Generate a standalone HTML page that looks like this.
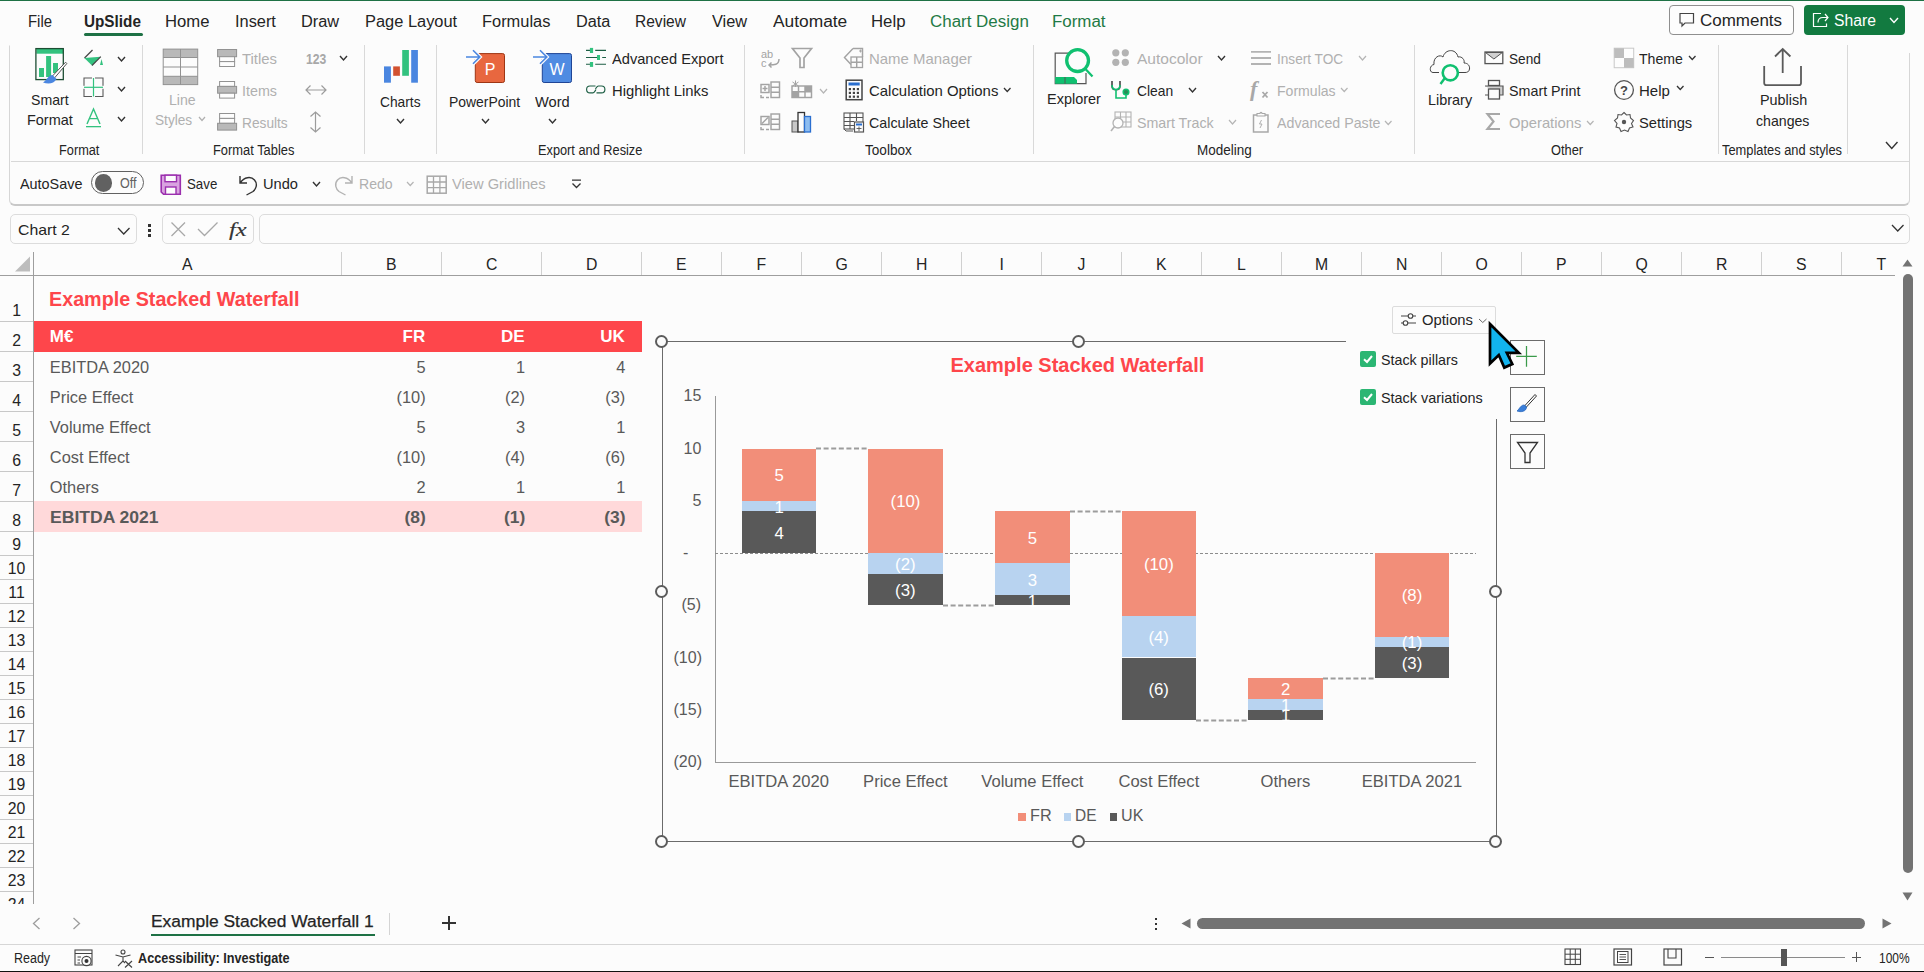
<!DOCTYPE html>
<html><head><meta charset="utf-8"><style>
html,body{margin:0;padding:0;}
body{width:1924px;height:972px;position:relative;overflow:hidden;background:#fcfcfc;font-family:"Liberation Sans",sans-serif;}
.t{position:absolute;white-space:nowrap;transform-origin:0 0;}
.r{position:absolute;}
svg.r{overflow:visible;}
</style></head><body>
<div class="r" style="left:0.0px;top:0.0px;width:1924.0px;height:1.0px;background:#1e7145;"></div>
<span class="t" style="left:27.60px;top:14.46px;font-size:16.00px;line-height:16.00px;color:#242424; transform:scaleX(0.9308);">File</span>
<span class="t" style="left:84.40px;top:14.46px;font-size:16.00px;line-height:16.00px;color:#242424;font-weight:bold; transform:scaleX(0.9550);">UpSlide</span>
<span class="t" style="left:165.30px;top:14.46px;font-size:16.00px;line-height:16.00px;color:#242424; transform:scaleX(1.0419);">Home</span>
<span class="t" style="left:235.20px;top:14.46px;font-size:16.00px;line-height:16.00px;color:#242424; transform:scaleX(1.0220);">Insert</span>
<span class="t" style="left:301.20px;top:14.46px;font-size:16.00px;line-height:16.00px;color:#242424; transform:scaleX(1.0211);">Draw</span>
<span class="t" style="left:365.20px;top:14.46px;font-size:16.00px;line-height:16.00px;color:#242424; transform:scaleX(1.0256);">Page Layout</span>
<span class="t" style="left:482.20px;top:14.46px;font-size:16.00px;line-height:16.00px;color:#242424; transform:scaleX(1.0254);">Formulas</span>
<span class="t" style="left:575.60px;top:14.46px;font-size:16.00px;line-height:16.00px;color:#242424; transform:scaleX(1.0176);">Data</span>
<span class="t" style="left:635.30px;top:14.46px;font-size:16.00px;line-height:16.00px;color:#242424; transform:scaleX(0.9717);">Review</span>
<span class="t" style="left:712.10px;top:14.46px;font-size:16.00px;line-height:16.00px;color:#242424; transform:scaleX(1.0229);">View</span>
<span class="t" style="left:772.60px;top:14.46px;font-size:16.00px;line-height:16.00px;color:#242424; transform:scaleX(1.0841);">Automate</span>
<span class="t" style="left:871.00px;top:14.46px;font-size:16.00px;line-height:16.00px;color:#242424; transform:scaleX(1.0485);">Help</span>
<span class="t" style="left:929.80px;top:14.46px;font-size:16.00px;line-height:16.00px;color:#1f7a45; transform:scaleX(1.0581);">Chart Design</span>
<span class="t" style="left:1052.00px;top:14.46px;font-size:16.00px;line-height:16.00px;color:#1f7a45; transform:scaleX(1.0569);">Format</span>
<div class="r" style="left:84.0px;top:33.0px;width:59.0px;height:3.0px;background:#1e7145;border-radius:1.5px;"></div>
<div class="r" style="left:1669.0px;top:5.0px;width:124.5px;height:30.0px;background:#fdfdfd;border:1px solid #8f8f8f;box-sizing:border-box;border-radius:4px;"></div>
<span class="t" style="left:1699.60px;top:13.46px;font-size:16.00px;line-height:16.00px;color:#242424; transform:scaleX(1.0610);">Comments</span>
<div class="r" style="left:1804.4px;top:5.0px;width:100.2px;height:30.0px;background:#127a40;border-radius:4px;"></div>
<span class="t" style="left:1834.40px;top:13.46px;font-size:16.00px;line-height:16.00px;color:#ffffff; transform:scaleX(0.9814);">Share</span>
<div class="r" style="left:9.0px;top:45.0px;width:1901.0px;height:161.0px;background:#fcfcfc;border:1px solid #d6d6d6;border-top-color:transparent;border-bottom:2px solid #c8c8c8;border-radius:0 0 6px 6px;box-sizing:border-box;"></div>
<div class="r" style="left:11.0px;top:161.0px;width:1898.0px;height:1.0px;background:#d8d8d8;"></div>
<div class="r" style="left:142.0px;top:45.0px;width:1.0px;height:109.0px;background:#d9d9d9;"></div>
<div class="r" style="left:364.0px;top:45.0px;width:1.0px;height:109.0px;background:#d9d9d9;"></div>
<div class="r" style="left:436.0px;top:45.0px;width:1.0px;height:109.0px;background:#d9d9d9;"></div>
<div class="r" style="left:744.0px;top:45.0px;width:1.0px;height:109.0px;background:#d9d9d9;"></div>
<div class="r" style="left:1033.2px;top:45.0px;width:1.0px;height:109.0px;background:#d9d9d9;"></div>
<div class="r" style="left:1414.1px;top:45.0px;width:1.0px;height:109.0px;background:#d9d9d9;"></div>
<div class="r" style="left:1717.5px;top:45.0px;width:1.0px;height:109.0px;background:#d9d9d9;"></div>
<div class="r" style="left:1846.5px;top:45.0px;width:1.0px;height:109.0px;background:#d9d9d9;"></div>
<span class="t" style="left:58.60px;top:142.65px;font-size:14.00px;line-height:14.00px;color:#242424; transform:scaleX(0.9114);">Format</span>
<span class="t" style="left:212.70px;top:142.65px;font-size:14.00px;line-height:14.00px;color:#242424; transform:scaleX(0.9205);">Format Tables</span>
<span class="t" style="left:538.00px;top:142.65px;font-size:14.00px;line-height:14.00px;color:#242424; transform:scaleX(0.9122);">Export and Resize</span>
<span class="t" style="left:865.40px;top:142.65px;font-size:14.00px;line-height:14.00px;color:#242424; transform:scaleX(0.9708);">Toolbox</span>
<span class="t" style="left:1196.60px;top:142.65px;font-size:14.00px;line-height:14.00px;color:#242424; transform:scaleX(0.9632);">Modeling</span>
<span class="t" style="left:1550.60px;top:142.65px;font-size:14.00px;line-height:14.00px;color:#242424; transform:scaleX(0.9171);">Other</span>
<span class="t" style="left:1722.20px;top:142.65px;font-size:14.00px;line-height:14.00px;color:#242424; transform:scaleX(0.9183);">Templates and styles</span>
<span class="t" style="left:31.20px;top:91.60px;font-size:15.00px;line-height:15.00px;color:#242424; transform:scaleX(0.9415);">Smart</span>
<span class="t" style="left:27.40px;top:111.50px;font-size:15.00px;line-height:15.00px;color:#242424; transform:scaleX(0.9625);">Format</span>
<span class="t" style="left:168.60px;top:92.30px;font-size:15.00px;line-height:15.00px;color:#b0b0b0; transform:scaleX(0.9429);">Line</span>
<span class="t" style="left:155.40px;top:112.20px;font-size:15.00px;line-height:15.00px;color:#b0b0b0; transform:scaleX(0.9098);">Styles</span>
<span class="t" style="left:242.30px;top:51.10px;font-size:15.00px;line-height:15.00px;color:#b0b0b0; transform:scaleX(0.9914);">Titles</span>
<span class="t" style="left:242.30px;top:83.30px;font-size:15.00px;line-height:15.00px;color:#b0b0b0; transform:scaleX(0.9541);">Items</span>
<span class="t" style="left:242.30px;top:115.30px;font-size:15.00px;line-height:15.00px;color:#b0b0b0; transform:scaleX(0.9140);">Results</span>
<span class="t" style="left:306.00px;top:51.10px;font-size:15.00px;line-height:15.00px;color:#a8a8a8;font-weight:bold; transform:scaleX(0.8120);">123</span>
<span class="t" style="left:380.30px;top:93.90px;font-size:15.00px;line-height:15.00px;color:#242424; transform:scaleX(0.9182);">Charts</span>
<span class="t" style="left:449.40px;top:93.90px;font-size:15.00px;line-height:15.00px;color:#242424; transform:scaleX(0.9282);">PowerPoint</span>
<span class="t" style="left:535.20px;top:93.90px;font-size:15.00px;line-height:15.00px;color:#242424; transform:scaleX(0.9750);">Word</span>
<span class="t" style="left:611.60px;top:51.20px;font-size:15.00px;line-height:15.00px;color:#242424; transform:scaleX(0.9757);">Advanced Export</span>
<span class="t" style="left:611.60px;top:83.20px;font-size:15.00px;line-height:15.00px;color:#242424; transform:scaleX(0.9878);">Highlight Links</span>
<span class="t" style="left:869.20px;top:51.10px;font-size:15.00px;line-height:15.00px;color:#b0b0b0; transform:scaleX(0.9961);">Name Manager</span>
<span class="t" style="left:869.20px;top:83.30px;font-size:15.00px;line-height:15.00px;color:#242424; transform:scaleX(0.9946);">Calculation Options</span>
<span class="t" style="left:869.20px;top:115.30px;font-size:15.00px;line-height:15.00px;color:#242424; transform:scaleX(0.9505);">Calculate Sheet</span>
<span class="t" style="left:1046.70px;top:90.80px;font-size:15.00px;line-height:15.00px;color:#242424; transform:scaleX(0.9643);">Explorer</span>
<span class="t" style="left:1136.50px;top:51.10px;font-size:15.00px;line-height:15.00px;color:#b0b0b0; transform:scaleX(1.0349);">Autocolor</span>
<span class="t" style="left:1136.50px;top:83.30px;font-size:15.00px;line-height:15.00px;color:#242424; transform:scaleX(0.9231);">Clean</span>
<span class="t" style="left:1136.50px;top:115.30px;font-size:15.00px;line-height:15.00px;color:#b0b0b0; transform:scaleX(0.9481);">Smart Track</span>
<span class="t" style="left:1276.70px;top:51.10px;font-size:15.00px;line-height:15.00px;color:#b0b0b0; transform:scaleX(0.9082);">Insert TOC</span>
<span class="t" style="left:1276.70px;top:83.30px;font-size:15.00px;line-height:15.00px;color:#b0b0b0; transform:scaleX(0.9381);">Formulas</span>
<span class="t" style="left:1276.70px;top:115.30px;font-size:15.00px;line-height:15.00px;color:#b0b0b0; transform:scaleX(0.9477);">Advanced Paste</span>
<span class="t" style="left:1428.40px;top:91.60px;font-size:15.00px;line-height:15.00px;color:#242424; transform:scaleX(0.9630);">Library</span>
<span class="t" style="left:1509.40px;top:51.10px;font-size:15.00px;line-height:15.00px;color:#242424; transform:scaleX(0.9086);">Send</span>
<span class="t" style="left:1509.40px;top:83.30px;font-size:15.00px;line-height:15.00px;color:#242424; transform:scaleX(0.9526);">Smart Print</span>
<span class="t" style="left:1509.40px;top:115.30px;font-size:15.00px;line-height:15.00px;color:#b0b0b0; transform:scaleX(0.9863);">Operations</span>
<span class="t" style="left:1639.00px;top:51.30px;font-size:15.00px;line-height:15.00px;color:#242424; transform:scaleX(0.9404);">Theme</span>
<span class="t" style="left:1639.00px;top:83.30px;font-size:15.00px;line-height:15.00px;color:#242424;">Help</span>
<span class="t" style="left:1639.00px;top:115.30px;font-size:15.00px;line-height:15.00px;color:#242424; transform:scaleX(0.9815);">Settings</span>
<span class="t" style="left:1760.00px;top:92.10px;font-size:15.00px;line-height:15.00px;color:#242424; transform:scaleX(0.9592);">Publish</span>
<span class="t" style="left:1756.20px;top:112.60px;font-size:15.00px;line-height:15.00px;color:#242424; transform:scaleX(0.9421);">changes</span>
<span class="t" style="left:20.10px;top:176.10px;font-size:15.00px;line-height:15.00px;color:#242424; transform:scaleX(0.9600);">AutoSave</span>
<div class="r" style="left:91.4px;top:170.6px;width:53.0px;height:23.7px;border:1px solid #616161;box-sizing:border-box;border-radius:12px;"></div>
<div class="r" style="left:95.3px;top:174.4px;width:17.2px;height:17.2px;border-radius:50%;background:#616161"></div>
<span class="t" style="left:119.60px;top:175.95px;font-size:14.00px;line-height:14.00px;color:#616161; transform:scaleX(0.8947);">Off</span>
<span class="t" style="left:186.50px;top:176.10px;font-size:15.00px;line-height:15.00px;color:#242424; transform:scaleX(0.8853);">Save</span>
<span class="t" style="left:263.40px;top:176.10px;font-size:15.00px;line-height:15.00px;color:#242424; transform:scaleX(0.9750);">Undo</span>
<span class="t" style="left:358.50px;top:176.10px;font-size:15.00px;line-height:15.00px;color:#b0b0b0; transform:scaleX(0.9389);">Redo</span>
<span class="t" style="left:452.00px;top:176.10px;font-size:15.00px;line-height:15.00px;color:#b0b0b0; transform:scaleX(0.9792);">View Gridlines</span>
<div class="r" style="left:10.0px;top:214.0px;width:127.0px;height:30.0px;background:#fcfcfc;border:1px solid #dcdcdc;box-sizing:border-box;border-radius:5px;"></div>
<span class="t" style="left:17.60px;top:221.90px;font-size:15.00px;line-height:15.00px;color:#242424; transform:scaleX(1.0551);">Chart 2</span>
<div class="r" style="left:162.0px;top:214.0px;width:92.0px;height:30.0px;background:#fcfcfc;border:1px solid #dcdcdc;box-sizing:border-box;border-radius:5px;"></div>
<div class="r" style="left:259.0px;top:214.0px;width:1651.0px;height:30.0px;background:#fcfcfc;border:1px solid #dcdcdc;box-sizing:border-box;border-radius:5px;"></div>
<div class="r" style="left:33.0px;top:252.0px;width:1.0px;height:652.0px;background:#9e9e9e;"></div>
<svg class="r" style="left:13.0px;top:255.0px;" width="18" height="18" viewBox="0 0 18 18"><polygon points="17,1.5 17,16.5 2,16.5" fill="#bdbdbd"/></svg>
<div class="r" style="left:0.0px;top:274.5px;width:1895.0px;height:1.0px;background:#9e9e9e;"></div>
<div class="r" style="left:340.5px;top:252.0px;width:1.0px;height:23.0px;background:#d0d0d0;"></div>
<span class="t" style="left:182.00px;top:257.23px;font-size:15.80px;line-height:15.80px;color:#242424;">A</span>
<div class="r" style="left:440.5px;top:252.0px;width:1.0px;height:23.0px;background:#d0d0d0;"></div>
<span class="t" style="left:386.00px;top:257.23px;font-size:15.80px;line-height:15.80px;color:#242424;">B</span>
<div class="r" style="left:540.5px;top:252.0px;width:1.0px;height:23.0px;background:#d0d0d0;"></div>
<span class="t" style="left:486.00px;top:257.23px;font-size:15.80px;line-height:15.80px;color:#242424;">C</span>
<div class="r" style="left:640.5px;top:252.0px;width:1.0px;height:23.0px;background:#d0d0d0;"></div>
<span class="t" style="left:586.00px;top:257.23px;font-size:15.80px;line-height:15.80px;color:#242424;">D</span>
<div class="r" style="left:720.5px;top:252.0px;width:1.0px;height:23.0px;background:#d0d0d0;"></div>
<span class="t" style="left:676.00px;top:257.23px;font-size:15.80px;line-height:15.80px;color:#242424;">E</span>
<div class="r" style="left:800.5px;top:252.0px;width:1.0px;height:23.0px;background:#d0d0d0;"></div>
<span class="t" style="left:756.50px;top:257.23px;font-size:15.80px;line-height:15.80px;color:#242424;">F</span>
<div class="r" style="left:880.5px;top:252.0px;width:1.0px;height:23.0px;background:#d0d0d0;"></div>
<span class="t" style="left:835.50px;top:257.23px;font-size:15.80px;line-height:15.80px;color:#242424;">G</span>
<div class="r" style="left:960.5px;top:252.0px;width:1.0px;height:23.0px;background:#d0d0d0;"></div>
<span class="t" style="left:916.00px;top:257.23px;font-size:15.80px;line-height:15.80px;color:#242424;">H</span>
<div class="r" style="left:1040.5px;top:252.0px;width:1.0px;height:23.0px;background:#d0d0d0;"></div>
<span class="t" style="left:999.50px;top:257.23px;font-size:15.80px;line-height:15.80px;color:#242424;">I</span>
<div class="r" style="left:1120.5px;top:252.0px;width:1.0px;height:23.0px;background:#d0d0d0;"></div>
<span class="t" style="left:1077.50px;top:257.23px;font-size:15.80px;line-height:15.80px;color:#242424;">J</span>
<div class="r" style="left:1200.5px;top:252.0px;width:1.0px;height:23.0px;background:#d0d0d0;"></div>
<span class="t" style="left:1156.00px;top:257.23px;font-size:15.80px;line-height:15.80px;color:#242424;">K</span>
<div class="r" style="left:1280.5px;top:252.0px;width:1.0px;height:23.0px;background:#d0d0d0;"></div>
<span class="t" style="left:1237.00px;top:257.23px;font-size:15.80px;line-height:15.80px;color:#242424;">L</span>
<div class="r" style="left:1360.5px;top:252.0px;width:1.0px;height:23.0px;background:#d0d0d0;"></div>
<span class="t" style="left:1315.00px;top:257.23px;font-size:15.80px;line-height:15.80px;color:#242424;">M</span>
<div class="r" style="left:1440.5px;top:252.0px;width:1.0px;height:23.0px;background:#d0d0d0;"></div>
<span class="t" style="left:1396.00px;top:257.23px;font-size:15.80px;line-height:15.80px;color:#242424;">N</span>
<div class="r" style="left:1520.5px;top:252.0px;width:1.0px;height:23.0px;background:#d0d0d0;"></div>
<span class="t" style="left:1475.50px;top:257.23px;font-size:15.80px;line-height:15.80px;color:#242424;">O</span>
<div class="r" style="left:1600.5px;top:252.0px;width:1.0px;height:23.0px;background:#d0d0d0;"></div>
<span class="t" style="left:1556.00px;top:257.23px;font-size:15.80px;line-height:15.80px;color:#242424;">P</span>
<div class="r" style="left:1680.5px;top:252.0px;width:1.0px;height:23.0px;background:#d0d0d0;"></div>
<span class="t" style="left:1635.50px;top:257.23px;font-size:15.80px;line-height:15.80px;color:#242424;">Q</span>
<div class="r" style="left:1760.5px;top:252.0px;width:1.0px;height:23.0px;background:#d0d0d0;"></div>
<span class="t" style="left:1716.00px;top:257.23px;font-size:15.80px;line-height:15.80px;color:#242424;">R</span>
<div class="r" style="left:1840.5px;top:252.0px;width:1.0px;height:23.0px;background:#d0d0d0;"></div>
<span class="t" style="left:1796.00px;top:257.23px;font-size:15.80px;line-height:15.80px;color:#242424;">S</span>
<span class="t" style="left:1876.50px;top:257.23px;font-size:15.80px;line-height:15.80px;color:#242424;">T</span>
<div class="r" style="left:0.0px;top:320.5px;width:33.0px;height:1.0px;background:#c8c8c8;"></div>
<span class="t" style="left:12.30px;top:302.63px;font-size:15.80px;line-height:15.80px;color:#242424;">1</span>
<div class="r" style="left:0.0px;top:350.5px;width:33.0px;height:1.0px;background:#c8c8c8;"></div>
<span class="t" style="left:12.30px;top:332.63px;font-size:15.80px;line-height:15.80px;color:#242424;">2</span>
<div class="r" style="left:0.0px;top:380.5px;width:33.0px;height:1.0px;background:#c8c8c8;"></div>
<span class="t" style="left:12.30px;top:362.63px;font-size:15.80px;line-height:15.80px;color:#242424;">3</span>
<div class="r" style="left:0.0px;top:410.5px;width:33.0px;height:1.0px;background:#c8c8c8;"></div>
<span class="t" style="left:12.30px;top:392.63px;font-size:15.80px;line-height:15.80px;color:#242424;">4</span>
<div class="r" style="left:0.0px;top:440.5px;width:33.0px;height:1.0px;background:#c8c8c8;"></div>
<span class="t" style="left:12.30px;top:422.63px;font-size:15.80px;line-height:15.80px;color:#242424;">5</span>
<div class="r" style="left:0.0px;top:470.5px;width:33.0px;height:1.0px;background:#c8c8c8;"></div>
<span class="t" style="left:12.30px;top:452.63px;font-size:15.80px;line-height:15.80px;color:#242424;">6</span>
<div class="r" style="left:0.0px;top:500.5px;width:33.0px;height:1.0px;background:#c8c8c8;"></div>
<span class="t" style="left:12.30px;top:482.63px;font-size:15.80px;line-height:15.80px;color:#242424;">7</span>
<div class="r" style="left:0.0px;top:530.5px;width:33.0px;height:1.0px;background:#c8c8c8;"></div>
<span class="t" style="left:12.30px;top:512.63px;font-size:15.80px;line-height:15.80px;color:#242424;">8</span>
<div class="r" style="left:0.0px;top:554.5px;width:33.0px;height:1.0px;background:#c8c8c8;"></div>
<span class="t" style="left:12.30px;top:536.63px;font-size:15.80px;line-height:15.80px;color:#242424;">9</span>
<div class="r" style="left:0.0px;top:578.5px;width:33.0px;height:1.0px;background:#c8c8c8;"></div>
<span class="t" style="left:7.80px;top:560.63px;font-size:15.80px;line-height:15.80px;color:#242424;">10</span>
<div class="r" style="left:0.0px;top:602.5px;width:33.0px;height:1.0px;background:#c8c8c8;"></div>
<span class="t" style="left:8.30px;top:584.63px;font-size:15.80px;line-height:15.80px;color:#242424;">11</span>
<div class="r" style="left:0.0px;top:626.5px;width:33.0px;height:1.0px;background:#c8c8c8;"></div>
<span class="t" style="left:7.80px;top:608.63px;font-size:15.80px;line-height:15.80px;color:#242424;">12</span>
<div class="r" style="left:0.0px;top:650.5px;width:33.0px;height:1.0px;background:#c8c8c8;"></div>
<span class="t" style="left:7.80px;top:632.63px;font-size:15.80px;line-height:15.80px;color:#242424;">13</span>
<div class="r" style="left:0.0px;top:674.5px;width:33.0px;height:1.0px;background:#c8c8c8;"></div>
<span class="t" style="left:7.80px;top:656.63px;font-size:15.80px;line-height:15.80px;color:#242424;">14</span>
<div class="r" style="left:0.0px;top:698.5px;width:33.0px;height:1.0px;background:#c8c8c8;"></div>
<span class="t" style="left:7.80px;top:680.63px;font-size:15.80px;line-height:15.80px;color:#242424;">15</span>
<div class="r" style="left:0.0px;top:722.5px;width:33.0px;height:1.0px;background:#c8c8c8;"></div>
<span class="t" style="left:7.80px;top:704.63px;font-size:15.80px;line-height:15.80px;color:#242424;">16</span>
<div class="r" style="left:0.0px;top:746.5px;width:33.0px;height:1.0px;background:#c8c8c8;"></div>
<span class="t" style="left:7.80px;top:728.63px;font-size:15.80px;line-height:15.80px;color:#242424;">17</span>
<div class="r" style="left:0.0px;top:770.5px;width:33.0px;height:1.0px;background:#c8c8c8;"></div>
<span class="t" style="left:7.80px;top:752.63px;font-size:15.80px;line-height:15.80px;color:#242424;">18</span>
<div class="r" style="left:0.0px;top:794.5px;width:33.0px;height:1.0px;background:#c8c8c8;"></div>
<span class="t" style="left:7.80px;top:776.63px;font-size:15.80px;line-height:15.80px;color:#242424;">19</span>
<div class="r" style="left:0.0px;top:818.5px;width:33.0px;height:1.0px;background:#c8c8c8;"></div>
<span class="t" style="left:7.80px;top:800.63px;font-size:15.80px;line-height:15.80px;color:#242424;">20</span>
<div class="r" style="left:0.0px;top:842.5px;width:33.0px;height:1.0px;background:#c8c8c8;"></div>
<span class="t" style="left:7.80px;top:824.63px;font-size:15.80px;line-height:15.80px;color:#242424;">21</span>
<div class="r" style="left:0.0px;top:866.5px;width:33.0px;height:1.0px;background:#c8c8c8;"></div>
<span class="t" style="left:7.80px;top:848.63px;font-size:15.80px;line-height:15.80px;color:#242424;">22</span>
<div class="r" style="left:0.0px;top:890.5px;width:33.0px;height:1.0px;background:#c8c8c8;"></div>
<span class="t" style="left:7.80px;top:872.63px;font-size:15.80px;line-height:15.80px;color:#242424;">23</span>
<span class="t" style="left:7.80px;top:896.63px;font-size:15.80px;line-height:15.80px;color:#242424;">24</span>
<span class="t" style="left:49.20px;top:289.07px;font-size:20.00px;line-height:20.00px;color:#fe464b;font-weight:bold; transform:scaleX(0.9866);">Example Stacked Waterfall</span>
<div class="r" style="left:34.0px;top:321.0px;width:608.0px;height:30.5px;background:#fe464b;"></div>
<span class="t" style="left:49.80px;top:328.41px;font-size:17.00px;line-height:17.00px;color:#ffffff;font-weight:bold;">M€</span>
<span class="t" style="left:402.50px;top:328.41px;font-size:17.00px;line-height:17.00px;color:#ffffff;font-weight:bold;">FR</span>
<span class="t" style="left:501.00px;top:328.41px;font-size:17.00px;line-height:17.00px;color:#ffffff;font-weight:bold;">DE</span>
<span class="t" style="left:600.30px;top:328.41px;font-size:17.00px;line-height:17.00px;color:#ffffff;font-weight:bold;">UK</span>
<span class="t" style="left:49.80px;top:358.82px;font-size:16.40px;line-height:16.40px;color:#595959;">EBITDA 2020</span>
<span class="t" style="left:416.50px;top:358.82px;font-size:16.40px;line-height:16.40px;color:#595959;">5</span>
<span class="t" style="left:516.00px;top:358.82px;font-size:16.40px;line-height:16.40px;color:#595959;">1</span>
<span class="t" style="left:616.30px;top:358.82px;font-size:16.40px;line-height:16.40px;color:#595959;">4</span>
<span class="t" style="left:49.80px;top:388.82px;font-size:16.40px;line-height:16.40px;color:#595959;">Price Effect</span>
<span class="t" style="left:396.50px;top:388.82px;font-size:16.40px;line-height:16.40px;color:#595959;">(10)</span>
<span class="t" style="left:505.00px;top:388.82px;font-size:16.40px;line-height:16.40px;color:#595959;">(2)</span>
<span class="t" style="left:605.30px;top:388.82px;font-size:16.40px;line-height:16.40px;color:#595959;">(3)</span>
<span class="t" style="left:49.80px;top:418.82px;font-size:16.40px;line-height:16.40px;color:#595959;">Volume Effect</span>
<span class="t" style="left:416.50px;top:418.82px;font-size:16.40px;line-height:16.40px;color:#595959;">5</span>
<span class="t" style="left:516.00px;top:418.82px;font-size:16.40px;line-height:16.40px;color:#595959;">3</span>
<span class="t" style="left:616.30px;top:418.82px;font-size:16.40px;line-height:16.40px;color:#595959;">1</span>
<span class="t" style="left:49.80px;top:448.82px;font-size:16.40px;line-height:16.40px;color:#595959;">Cost Effect</span>
<span class="t" style="left:396.50px;top:448.82px;font-size:16.40px;line-height:16.40px;color:#595959;">(10)</span>
<span class="t" style="left:505.00px;top:448.82px;font-size:16.40px;line-height:16.40px;color:#595959;">(4)</span>
<span class="t" style="left:605.30px;top:448.82px;font-size:16.40px;line-height:16.40px;color:#595959;">(6)</span>
<span class="t" style="left:49.80px;top:478.82px;font-size:16.40px;line-height:16.40px;color:#595959;">Others</span>
<span class="t" style="left:416.50px;top:478.82px;font-size:16.40px;line-height:16.40px;color:#595959;">2</span>
<span class="t" style="left:516.00px;top:478.82px;font-size:16.40px;line-height:16.40px;color:#595959;">1</span>
<span class="t" style="left:616.30px;top:478.82px;font-size:16.40px;line-height:16.40px;color:#595959;">1</span>
<div class="r" style="left:34.0px;top:501.0px;width:608.0px;height:30.5px;background:#ffd9da;"></div>
<span class="t" style="left:49.80px;top:508.57px;font-size:17.40px;line-height:17.40px;color:#595959;font-weight:bold; transform:scaleX(1.0093);">EBITDA 2021</span>
<span class="t" style="left:404.50px;top:508.57px;font-size:17.40px;line-height:17.40px;color:#595959;font-weight:bold;">(8)</span>
<span class="t" style="left:504.00px;top:508.57px;font-size:17.40px;line-height:17.40px;color:#595959;font-weight:bold;">(1)</span>
<span class="t" style="left:604.30px;top:508.57px;font-size:17.40px;line-height:17.40px;color:#595959;font-weight:bold;">(3)</span>
<div class="r" style="left:662.0px;top:341.0px;width:1.0px;height:501.0px;background:#6b6b6b;"></div>
<div class="r" style="left:662.0px;top:841.0px;width:834.0px;height:1.0px;background:#6b6b6b;"></div>
<div class="r" style="left:662.0px;top:341.0px;width:684.0px;height:1.0px;background:#6b6b6b;"></div>
<div class="r" style="left:1495.5px;top:419.0px;width:1.0px;height:423.0px;background:#6b6b6b;"></div>
<span class="t" style="left:950.50px;top:355.07px;font-size:20.00px;line-height:20.00px;color:#fe464b;font-weight:bold;">Example Stacked Waterfall</span>
<div class="r" style="left:715.0px;top:396.4px;width:1.0px;height:366.0px;background:#9a9a9a;"></div>
<div class="r" style="left:715.0px;top:761.5px;width:761.0px;height:1.0px;background:#9a9a9a;"></div>
<span class="t" style="left:683.50px;top:388.37px;font-size:16.00px;line-height:16.00px;color:#595959;">15</span>
<span class="t" style="left:683.50px;top:440.60px;font-size:16.00px;line-height:16.00px;color:#595959;">10</span>
<span class="t" style="left:692.50px;top:492.83px;font-size:16.00px;line-height:16.00px;color:#595959;">5</span>
<span class="t" style="left:683.00px;top:545.06px;font-size:16.00px;line-height:16.00px;color:#595959;">-</span>
<span class="t" style="left:681.50px;top:597.29px;font-size:16.00px;line-height:16.00px;color:#595959;">(5)</span>
<span class="t" style="left:673.50px;top:649.52px;font-size:16.00px;line-height:16.00px;color:#595959;">(10)</span>
<span class="t" style="left:673.50px;top:701.75px;font-size:16.00px;line-height:16.00px;color:#595959;">(15)</span>
<span class="t" style="left:673.50px;top:753.98px;font-size:16.00px;line-height:16.00px;color:#595959;">(20)</span>
<svg class="r" style="left:715px;top:552.5px" width="761" height="2"><line x1="0" y1="0.5" x2="761" y2="0.5" stroke="#8c8c8c" stroke-width="1" stroke-dasharray="3,2"/></svg>
<div class="r" style="left:741.6px;top:511.2px;width:74.6px;height:41.8px;background:#595959;"></div>
<div class="r" style="left:741.6px;top:500.8px;width:74.6px;height:10.4px;background:#b8d3f0;"></div>
<div class="r" style="left:741.6px;top:448.5px;width:74.6px;height:52.2px;background:#f28e79;"></div>
<span class="t" style="left:774.43px;top:525.69px;font-size:16.80px;line-height:16.80px;color:#ffffff;">4</span>
<span class="t" style="left:774.43px;top:499.57px;font-size:16.80px;line-height:16.80px;color:#ffffff;">1</span>
<span class="t" style="left:774.43px;top:468.23px;font-size:16.80px;line-height:16.80px;color:#ffffff;">5</span>
<span class="t" style="left:728.43px;top:773.65px;font-size:16.60px;line-height:16.60px;color:#595959;">EBITDA 2020</span>
<div class="r" style="left:868.3px;top:448.5px;width:74.6px;height:104.5px;background:#f28e79;"></div>
<div class="r" style="left:868.3px;top:553.0px;width:74.6px;height:20.9px;background:#b8d3f0;"></div>
<div class="r" style="left:868.3px;top:573.9px;width:74.6px;height:31.3px;background:#595959;"></div>
<span class="t" style="left:890.59px;top:494.35px;font-size:16.80px;line-height:16.80px;color:#ffffff;">(10)</span>
<span class="t" style="left:895.09px;top:557.02px;font-size:16.80px;line-height:16.80px;color:#ffffff;">(2)</span>
<span class="t" style="left:895.09px;top:583.14px;font-size:16.80px;line-height:16.80px;color:#ffffff;">(3)</span>
<span class="t" style="left:863.09px;top:773.65px;font-size:16.60px;line-height:16.60px;color:#595959;">Price Effect</span>
<div class="r" style="left:995.0px;top:594.8px;width:74.6px;height:10.4px;background:#595959;"></div>
<div class="r" style="left:995.0px;top:563.4px;width:74.6px;height:31.3px;background:#b8d3f0;"></div>
<div class="r" style="left:995.0px;top:511.2px;width:74.6px;height:52.2px;background:#f28e79;"></div>
<span class="t" style="left:1027.75px;top:593.59px;font-size:16.80px;line-height:16.80px;color:#ffffff;">1</span>
<span class="t" style="left:1027.75px;top:572.69px;font-size:16.80px;line-height:16.80px;color:#ffffff;">3</span>
<span class="t" style="left:1027.75px;top:530.91px;font-size:16.80px;line-height:16.80px;color:#ffffff;">5</span>
<span class="t" style="left:981.25px;top:773.65px;font-size:16.60px;line-height:16.60px;color:#595959;">Volume Effect</span>
<div class="r" style="left:1121.6px;top:511.2px;width:74.6px;height:104.5px;background:#f28e79;"></div>
<div class="r" style="left:1121.6px;top:615.7px;width:74.6px;height:41.8px;background:#b8d3f0;"></div>
<div class="r" style="left:1121.6px;top:657.5px;width:74.6px;height:62.7px;background:#595959;"></div>
<span class="t" style="left:1143.91px;top:557.02px;font-size:16.80px;line-height:16.80px;color:#ffffff;">(10)</span>
<span class="t" style="left:1148.41px;top:630.15px;font-size:16.80px;line-height:16.80px;color:#ffffff;">(4)</span>
<span class="t" style="left:1148.41px;top:682.38px;font-size:16.80px;line-height:16.80px;color:#ffffff;">(6)</span>
<span class="t" style="left:1118.41px;top:773.65px;font-size:16.60px;line-height:16.60px;color:#595959;">Cost Effect</span>
<div class="r" style="left:1248.3px;top:709.7px;width:74.6px;height:10.4px;background:#595959;"></div>
<div class="r" style="left:1248.3px;top:699.2px;width:74.6px;height:10.4px;background:#b8d3f0;"></div>
<div class="r" style="left:1248.3px;top:678.4px;width:74.6px;height:20.9px;background:#f28e79;"></div>
<span class="t" style="left:1281.07px;top:708.49px;font-size:16.80px;line-height:16.80px;color:#ffffff;">1</span>
<span class="t" style="left:1281.07px;top:698.05px;font-size:16.80px;line-height:16.80px;color:#ffffff;">1</span>
<span class="t" style="left:1281.07px;top:682.38px;font-size:16.80px;line-height:16.80px;color:#ffffff;">2</span>
<span class="t" style="left:1260.57px;top:773.65px;font-size:16.60px;line-height:16.60px;color:#595959;">Others</span>
<div class="r" style="left:1374.9px;top:553.0px;width:74.6px;height:83.6px;background:#f28e79;"></div>
<div class="r" style="left:1374.9px;top:636.6px;width:74.6px;height:10.4px;background:#b8d3f0;"></div>
<div class="r" style="left:1374.9px;top:647.0px;width:74.6px;height:31.3px;background:#595959;"></div>
<span class="t" style="left:1401.73px;top:588.36px;font-size:16.80px;line-height:16.80px;color:#ffffff;">(8)</span>
<span class="t" style="left:1401.73px;top:635.37px;font-size:16.80px;line-height:16.80px;color:#ffffff;">(1)</span>
<span class="t" style="left:1401.73px;top:656.26px;font-size:16.80px;line-height:16.80px;color:#ffffff;">(3)</span>
<span class="t" style="left:1361.73px;top:773.65px;font-size:16.60px;line-height:16.60px;color:#595959;">EBITDA 2021</span>
<svg class="r" style="left:816.2px;top:447.0px" width="52.1" height="3"><line x1="0" y1="1.5" x2="52.1" y2="1.5" stroke="#9c9c9c" stroke-width="2.2" stroke-dasharray="5,2.6"/></svg>
<svg class="r" style="left:942.9px;top:603.7px" width="52.1" height="3"><line x1="0" y1="1.5" x2="52.1" y2="1.5" stroke="#9c9c9c" stroke-width="2.2" stroke-dasharray="5,2.6"/></svg>
<svg class="r" style="left:1069.5px;top:509.7px" width="52.1" height="3"><line x1="0" y1="1.5" x2="52.1" y2="1.5" stroke="#9c9c9c" stroke-width="2.2" stroke-dasharray="5,2.6"/></svg>
<svg class="r" style="left:1196.2px;top:718.6px" width="52.1" height="3"><line x1="0" y1="1.5" x2="52.1" y2="1.5" stroke="#9c9c9c" stroke-width="2.2" stroke-dasharray="5,2.6"/></svg>
<svg class="r" style="left:1322.9px;top:676.9px" width="52.1" height="3"><line x1="0" y1="1.5" x2="52.1" y2="1.5" stroke="#9c9c9c" stroke-width="2.2" stroke-dasharray="5,2.6"/></svg>
<div class="r" style="left:1018.3px;top:812.8px;width:7.5px;height:7.8px;background:#f28e79;"></div>
<span class="t" style="left:1030.20px;top:807.95px;font-size:16.60px;line-height:16.60px;color:#595959; transform:scaleX(0.9773);">FR</span>
<div class="r" style="left:1063.6px;top:812.8px;width:7.5px;height:7.8px;background:#b8d3f0;"></div>
<span class="t" style="left:1075.00px;top:807.95px;font-size:16.60px;line-height:16.60px;color:#595959; transform:scaleX(0.9304);">DE</span>
<div class="r" style="left:1109.5px;top:812.8px;width:7.5px;height:7.8px;background:#595959;"></div>
<span class="t" style="left:1120.90px;top:807.95px;font-size:16.60px;line-height:16.60px;color:#595959; transform:scaleX(0.9708);">UK</span>
<div class="r" style="left:655.3px;top:334.6px;width:9.2px;height:9.2px;border:2.4px solid #5c5c5c;border-radius:50%;background:#fcfcfc"></div>
<div class="r" style="left:1072.0px;top:334.6px;width:9.2px;height:9.2px;border:2.4px solid #5c5c5c;border-radius:50%;background:#fcfcfc"></div>
<div class="r" style="left:655.3px;top:584.6px;width:9.2px;height:9.2px;border:2.4px solid #5c5c5c;border-radius:50%;background:#fcfcfc"></div>
<div class="r" style="left:1488.9px;top:584.6px;width:9.2px;height:9.2px;border:2.4px solid #5c5c5c;border-radius:50%;background:#fcfcfc"></div>
<div class="r" style="left:655.3px;top:834.5px;width:9.2px;height:9.2px;border:2.4px solid #5c5c5c;border-radius:50%;background:#fcfcfc"></div>
<div class="r" style="left:1072.0px;top:834.5px;width:9.2px;height:9.2px;border:2.4px solid #5c5c5c;border-radius:50%;background:#fcfcfc"></div>
<div class="r" style="left:1488.9px;top:834.5px;width:9.2px;height:9.2px;border:2.4px solid #5c5c5c;border-radius:50%;background:#fcfcfc"></div>
<div class="r" style="left:1392.4px;top:305.5px;width:103.6px;height:28.7px;background:#fcfcfc;border:1px solid #dcdcdc;box-sizing:border-box;border-radius:2px;"></div>
<span class="t" style="left:1421.60px;top:311.60px;font-size:15.00px;line-height:15.00px;color:#242424; transform:scaleX(0.9865);">Options</span>
<div class="r" style="left:1360.1px;top:351.1px;width:16.0px;height:16.0px;background:#2bb673;border-radius:2px;"></div>
<svg class="r" style="left:1360.1px;top:351.1px;" width="16" height="16" viewBox="0 0 16 16"><polyline points="4,8.3 7,11 12,5" fill="none" stroke="#fff" stroke-width="2"/></svg>
<span class="t" style="left:1381.00px;top:352.00px;font-size:15.00px;line-height:15.00px;color:#242424; transform:scaleX(0.9506);">Stack pillars</span>
<div class="r" style="left:1360.1px;top:389.0px;width:16.0px;height:16.0px;background:#2bb673;border-radius:2px;"></div>
<svg class="r" style="left:1360.1px;top:389.0px;" width="16" height="16" viewBox="0 0 16 16"><polyline points="4,8.3 7,11 12,5" fill="none" stroke="#fff" stroke-width="2"/></svg>
<span class="t" style="left:1381.00px;top:389.90px;font-size:15.00px;line-height:15.00px;color:#242424; transform:scaleX(0.9604);">Stack variations</span>
<div class="r" style="left:1510.2px;top:340.1px;width:34.5px;height:34.5px;background:#fcfcfc;border:1px solid #6b6b6b;box-sizing:border-box;"></div>
<div class="r" style="left:1510.2px;top:387.0px;width:34.5px;height:34.5px;background:#fcfcfc;border:1px solid #6b6b6b;box-sizing:border-box;"></div>
<div class="r" style="left:1510.2px;top:434.1px;width:34.5px;height:34.5px;background:#fcfcfc;border:1px solid #6b6b6b;box-sizing:border-box;"></div>
<div class="r" style="left:0.0px;top:904.0px;width:1924.0px;height:68.0px;background:#fcfcfc;"></div>
<div class="r" style="left:1902.5px;top:273.6px;width:10.0px;height:599.0px;background:#737373;border-radius:5px;"></div>
<svg class="r" style="left:1901.8px;top:259.0px;" width="11" height="8" viewBox="0 0 11 8"><polygon points="0.5,7.5 5.5,0.5 10.5,7.5" fill="#737373"/></svg>
<svg class="r" style="left:1901.8px;top:892.0px;" width="11" height="9" viewBox="0 0 11 9"><polygon points="0.5,0.5 10.5,0.5 5.5,8.5" fill="#737373"/></svg>
<div class="r" style="left:1197.0px;top:918.0px;width:668.0px;height:11.0px;background:#737373;border-radius:5.5px;"></div>
<svg class="r" style="left:1181.0px;top:918.0px;" width="10" height="11" viewBox="0 0 10 11"><polygon points="9.5,0.5 9.5,10.5 0.5,5.5" fill="#737373"/></svg>
<svg class="r" style="left:1881.6px;top:918.0px;" width="10" height="11" viewBox="0 0 10 11"><polygon points="0.5,0.5 0.5,10.5 9.5,5.5" fill="#737373"/></svg>
<div class="r" style="left:1154.5px;top:917.5px;width:2.6px;height:2.6px;background:#333;"></div>
<div class="r" style="left:1154.5px;top:922.5px;width:2.6px;height:2.6px;background:#333;"></div>
<div class="r" style="left:1154.5px;top:927.5px;width:2.6px;height:2.6px;background:#333;"></div>
<svg class="r" style="left:31.5px;top:916.5px;" width="9" height="13" viewBox="0 0 9 13"><polyline points="7.5,1 1.5,6.5 7.5,12" fill="none" stroke="#9d9d9d" stroke-width="1.3"/></svg>
<svg class="r" style="left:71.5px;top:916.5px;" width="9" height="13" viewBox="0 0 9 13"><polyline points="1.5,1 7.5,6.5 1.5,12" fill="none" stroke="#9d9d9d" stroke-width="1.3"/></svg>
<span class="t" style="left:151.40px;top:913.58px;font-size:16.80px;line-height:16.80px;color:#242424; transform:scaleX(1.0367);-webkit-text-stroke:0.25px #242424;">Example Stacked Waterfall 1</span>
<div class="r" style="left:151.0px;top:933.7px;width:223.5px;height:2.0px;background:#1e7145;"></div>
<div class="r" style="left:389.0px;top:912.5px;width:1.0px;height:22.5px;background:#d4d4d4;"></div>
<div class="r" style="left:442.0px;top:922.3px;width:14.0px;height:1.4px;background:#333;"></div>
<div class="r" style="left:448.3px;top:916.0px;width:1.4px;height:14.0px;background:#333;"></div>
<div class="r" style="left:0.0px;top:944.0px;width:1924.0px;height:1.0px;background:#d6d6d6;"></div>
<span class="t" style="left:14.20px;top:951.05px;font-size:14.00px;line-height:14.00px;color:#242424; transform:scaleX(0.8925);">Ready</span>
<span class="t" style="left:137.70px;top:951.05px;font-size:14.00px;line-height:14.00px;color:#242424;font-weight:bold; transform:scaleX(0.9054);">Accessibility: Investigate</span>
<span class="t" style="left:1878.60px;top:951.05px;font-size:14.00px;line-height:14.00px;color:#242424; transform:scaleX(0.8556);">100%</span>
<div class="r" style="left:0.0px;top:971.0px;width:1924.0px;height:1.0px;background:#111;"></div>
<div class="r" style="left:60.0px;top:971.0px;width:360.0px;height:1.0px;background:#555;"></div>
<div class="r" style="left:1704.7px;top:956.5px;width:9.8px;height:1.2px;background:#555;"></div>
<div class="r" style="left:1851.6px;top:956.5px;width:9.8px;height:1.2px;background:#555;"></div>
<div class="r" style="left:1855.8px;top:952.0px;width:1.2px;height:10.0px;background:#555;"></div>
<div class="r" style="left:1721.0px;top:956.6px;width:124.0px;height:1.0px;background:#8a8a8a;"></div>
<div class="r" style="left:1781.0px;top:949.0px;width:6.4px;height:17.0px;background:#555;"></div>
<svg class="r" style="left:33.0px;top:46.0px;" width="36" height="40" viewBox="0 0 36 40"><rect x="3.4" y="2.3" width="26.8" height="5.4" fill="#33c27f"/><rect x="2.9" y="2.6" width="27.4" height="31" fill="none" stroke="#1d4d33" stroke-width="1.3"/><rect x="6" y="22" width="5" height="9" fill="#33c27f"/><rect x="13.1" y="10" width="5" height="21" fill="#33c27f"/><rect x="20" y="17" width="5" height="10" fill="#33c27f"/><path d="M32.6,16.2 L18.5,31 L20.6,33 L33.8,17.6 Z" fill="#fff" stroke="#555" stroke-width="1"/><path d="M19.5,29 C15.5,29 14,34 10,36.5 C15,38.5 21,38 23.5,33 Z" fill="#4a86e0"/></svg>
<svg class="r" style="left:82.0px;top:48.0px;" width="22" height="20" viewBox="0 0 22 20"><line x1="10.5" y1="2" x2="2.5" y2="10" stroke="#444" stroke-width="1.2"/><path d="M2.3,10 L10,17.5 L18.5,9 L18.5,8.8 Z" fill="#33c27f"/><line x1="10" y1="17.5" x2="18.8" y2="8.7" stroke="#444" stroke-width="1.2"/><path d="M19.5,11 L18,17 L21,17 Z" fill="#33c27f"/></svg>
<svg class="r" style="left:83.0px;top:77.0px;" width="21" height="21" viewBox="0 0 21 21"><path d="M1,1 H20 V19.5 H1 Z" fill="none" stroke="#5a5a5a" stroke-width="1.1"/><line x1="10.5" y1="0" x2="10.5" y2="20.5" stroke="#fcfcfc" stroke-width="3"/><line x1="0" y1="10.3" x2="21" y2="10.3" stroke="#fcfcfc" stroke-width="3"/><line x1="10.5" y1="1" x2="10.5" y2="19.5" stroke="#33c27f" stroke-width="1.2"/><line x1="1" y1="10.3" x2="20" y2="10.3" stroke="#33c27f" stroke-width="1.2"/></svg>
<svg class="r" style="left:84.0px;top:107.0px;" width="19" height="22" viewBox="0 0 19 22"><path d="M3,17 L9.5,2 L16,17 M5.3,11.6 H13.7" fill="none" stroke="#33c27f" stroke-width="1.4"/><rect x="2" y="19" width="15" height="1.3" fill="#33c27f"/></svg>
<svg class="r" style="left:115.7px;top:54.6px;" width="11" height="8" viewBox="0 0 11 8"><polyline points="2,2 5.5,6 9,2" fill="none" stroke="#333" stroke-width="1.4"/></svg>
<svg class="r" style="left:115.7px;top:84.9px;" width="11" height="8" viewBox="0 0 11 8"><polyline points="2,2 5.5,6 9,2" fill="none" stroke="#333" stroke-width="1.4"/></svg>
<svg class="r" style="left:115.7px;top:114.7px;" width="11" height="8" viewBox="0 0 11 8"><polyline points="2,2 5.5,6 9,2" fill="none" stroke="#333" stroke-width="1.4"/></svg>
<svg class="r" style="left:162.0px;top:48.0px;" width="37" height="38" viewBox="0 0 37 38"><rect x="1.2" y="1.1" width="34.5" height="8.4" fill="#b9b9b9"/><rect x="1.2" y="28.3" width="34.5" height="8.3" fill="#b9b9b9"/><rect x="1.2" y="1.1" width="34.5" height="35.5" fill="none" stroke="#929292" stroke-width="1"/><path d="M1.2,9.5 H35.7 M1.2,19 H35.7 M1.2,28.3 H35.7 M18.5,1.1 V36.6" stroke="#929292" stroke-width="1"/></svg>
<svg class="r" style="left:196.5px;top:114.8px;" width="10" height="7.5" viewBox="0 0 10 7.5"><polyline points="2,2 5,5.5 8,2" fill="none" stroke="#b0b0b0" stroke-width="1.2"/></svg>
<svg class="r" style="left:217.0px;top:48.6px;" width="20" height="19" viewBox="0 0 20 19"><rect x="0.6" y="0.5" width="19" height="7.2" fill="#b9b9b9" stroke="#929292" stroke-width="1"/><rect x="2.6" y="7.7" width="15" height="4.9" fill="#fdfdfd" stroke="#929292" stroke-width="1"/><rect x="2.6" y="12.6" width="15" height="4.9" fill="#fdfdfd" stroke="#929292" stroke-width="1"/></svg>
<svg class="r" style="left:217.0px;top:80.6px;" width="20" height="19" viewBox="0 0 20 19"><rect x="2.6" y="0.5" width="15" height="4.9" fill="#fdfdfd" stroke="#929292" stroke-width="1"/><rect x="0.6" y="5.4" width="19" height="6.8" fill="#b9b9b9" stroke="#929292" stroke-width="1"/><rect x="2.6" y="12.2" width="15" height="4.9" fill="#fdfdfd" stroke="#929292" stroke-width="1"/></svg>
<svg class="r" style="left:217.0px;top:112.6px;" width="20" height="19" viewBox="0 0 20 19"><rect x="2.6" y="0.5" width="15" height="4.9" fill="#fdfdfd" stroke="#929292" stroke-width="1"/><rect x="2.6" y="5.4" width="15" height="4.9" fill="#fdfdfd" stroke="#929292" stroke-width="1"/><rect x="0.6" y="10.3" width="19" height="6.8" fill="#b9b9b9" stroke="#929292" stroke-width="1"/></svg>
<svg class="r" style="left:338.0px;top:54.3px;" width="11" height="8" viewBox="0 0 11 8"><polyline points="2,2 5.5,6 9,2" fill="none" stroke="#333" stroke-width="1.4"/></svg>
<svg class="r" style="left:305.0px;top:84.0px;" width="22" height="12" viewBox="0 0 22 12"><path d="M1,6 H21 M5.5,1.5 L1,6 L5.5,10.5 M16.5,1.5 L21,6 L16.5,10.5" fill="none" stroke="#9c9c9c" stroke-width="1.2"/></svg>
<svg class="r" style="left:309.0px;top:111.0px;" width="13" height="22" viewBox="0 0 13 22"><path d="M6.5,1 V21 M1.5,5.5 L6.5,1 L11.5,5.5 M1.5,16.5 L6.5,21 L11.5,16.5" fill="none" stroke="#9c9c9c" stroke-width="1.2"/></svg>
<svg class="r" style="left:383.0px;top:49.0px;" width="36" height="34" viewBox="0 0 36 34"><rect x="1" y="17.4" width="6.9" height="16.3" fill="#4a86e0"/><rect x="10.2" y="17.4" width="6.7" height="9.4" fill="#d35230"/><rect x="19.2" y="1" width="6.7" height="25.8" fill="#33c27f"/><rect x="28.2" y="1" width="6.7" height="32.7" fill="#4a86e0"/></svg>
<svg class="r" style="left:395.0px;top:116.8px;" width="11" height="8" viewBox="0 0 11 8"><polyline points="2,2 5.5,6 9,2" fill="none" stroke="#333" stroke-width="1.4"/></svg>
<svg class="r" style="left:465.0px;top:49.0px;" width="41" height="35" viewBox="0 0 41 35"><rect x="10.3" y="4.6" width="29.2" height="28.9" rx="1.8" fill="#e8673f" stroke="#9e3614" stroke-width="1"/><path d="M1,8 H14.5 M8,1.2 L14.8,8 L8,14.8" fill="none" stroke="#fcfcfc" stroke-width="3.8"/><path d="M1,8 H14.5 M8,1.2 L14.8,8 L8,14.8" fill="none" stroke="#4a86e0" stroke-width="1.6"/><text x="25" y="25.5" text-anchor="middle" font-family="Liberation Sans" font-size="16" fill="#fff">P</text></svg>
<svg class="r" style="left:532.0px;top:49.0px;" width="41" height="35" viewBox="0 0 41 35"><rect x="10.3" y="4.6" width="29.2" height="28.9" rx="1.8" fill="#4f8be2" stroke="#1f4596" stroke-width="1"/><path d="M1,8 H14.5 M8,1.2 L14.8,8 L8,14.8" fill="none" stroke="#fcfcfc" stroke-width="3.8"/><path d="M1,8 H14.5 M8,1.2 L14.8,8 L8,14.8" fill="none" stroke="#4a86e0" stroke-width="1.6"/><text x="25" y="25.5" text-anchor="middle" font-family="Liberation Sans" font-size="16" fill="#fff">W</text></svg>
<svg class="r" style="left:480.0px;top:116.8px;" width="11" height="8" viewBox="0 0 11 8"><polyline points="2,2 5.5,6 9,2" fill="none" stroke="#333" stroke-width="1.4"/></svg>
<svg class="r" style="left:547.0px;top:116.8px;" width="11" height="8" viewBox="0 0 11 8"><polyline points="2,2 5.5,6 9,2" fill="none" stroke="#333" stroke-width="1.4"/></svg>
<svg class="r" style="left:585.0px;top:46.0px;" width="22" height="23" viewBox="0 0 22 23"><path d="M1,4.4 H5 M10.2,4.4 H21 M1,11.5 H12 M17.2,11.5 H21 M1,18.3 H5 M10.2,18.3 H21" stroke="#1d5e44" stroke-width="1.1"/><rect x="4.9" y="1.9" width="3.2" height="5.1" fill="#33c27f"/><rect x="12" y="9" width="3" height="5" fill="#33c27f"/><rect x="4.9" y="16" width="3.2" height="4.9" fill="#33c27f"/></svg>
<svg class="r" style="left:585.0px;top:84.0px;" width="22" height="11" viewBox="0 0 22 11"><path d="M10.5,2 H5 A3.4,3.4 0 0 0 5,8.8 H8 C9.5,8.8 10,7 11,5.5 M11.5,8.8 H16.5 A3.4,3.4 0 0 0 16.5,2 H13.5 C12,2 11.5,3.5 10.5,5" fill="none" stroke="#1d5e44" stroke-width="1.15"/></svg>
<svg class="r" style="left:759.0px;top:48.0px;" width="22" height="21" viewBox="0 0 22 21"><text x="2" y="10" font-family="Liberation Sans" font-size="11" fill="#a3a3a3">ab</text><text x="2" y="19" font-family="Liberation Sans" font-size="11" fill="#a3a3a3">c</text><path d="M20,11 C20,17 15,17 10,17 M12.5,14.5 L10,17 L12.5,19.5" fill="none" stroke="#a3a3a3" stroke-width="1.45"/></svg>
<svg class="r" style="left:791.0px;top:47.0px;" width="22" height="22" viewBox="0 0 22 22"><path d="M1.5,1.5 H20.5 L13,11 V20.5 H9 V11 Z" fill="none" stroke="#a3a3a3" stroke-width="1.7"/></svg>
<svg class="r" style="left:759.5px;top:80.5px;" width="21" height="18" viewBox="0 0 21 18"><rect x="11" y="1" width="8.5" height="15.5" fill="none" stroke="#a3a3a3" stroke-width="1.45"/><path d="M11,6.2 H19.5 M11,11.3 H19.5" stroke="#a3a3a3" stroke-width="1.45"/><rect x="1" y="3.5" width="8" height="8" fill="none" stroke="#a3a3a3" stroke-width="1.45"/><path d="M1,14 V16.5 H4 M6,16.5 H9" stroke="#a3a3a3" stroke-width="1.45" fill="none"/><path d="M5,5 V10 M2.5,7.5 H7.5" stroke="#a3a3a3" stroke-width="1.45"/></svg>
<svg class="r" style="left:759.5px;top:112.5px;" width="21" height="18" viewBox="0 0 21 18"><rect x="11" y="1" width="8.5" height="15.5" fill="none" stroke="#a3a3a3" stroke-width="1.45"/><path d="M11,6.2 H19.5 M11,11.3 H19.5" stroke="#a3a3a3" stroke-width="1.45"/><rect x="1" y="3.5" width="8" height="8" fill="none" stroke="#a3a3a3" stroke-width="1.45"/><path d="M1,14 V16.5 H4 M6,16.5 H9" stroke="#a3a3a3" stroke-width="1.45" fill="none"/><path d="M2,10.5 L8,4.5" stroke="#a3a3a3" stroke-width="1.45"/></svg>
<svg class="r" style="left:791.0px;top:80.0px;" width="22" height="19" viewBox="0 0 22 19"><rect x="1" y="6" width="19.5" height="11.5" fill="none" stroke="#a3a3a3" stroke-width="1.45"/><path d="M1,11.8 H20.5 M7.5,6 V17.5 M14,6 V17.5" stroke="#a3a3a3" stroke-width="1.45"/><rect x="1" y="11.8" width="6.5" height="5.7" fill="#a3a3a3"/><rect x="14" y="6" width="6.5" height="5.8" fill="#a3a3a3"/><path d="M4.5,0.5 V7 M1.5,2 L7.5,6 M7.5,2 L1.5,6" stroke="#a3a3a3" stroke-width="1"/></svg>
<svg class="r" style="left:818.0px;top:86.5px;" width="11" height="8" viewBox="0 0 11 8"><polyline points="2,2 5.5,6 9,2" fill="none" stroke="#b5b5b5" stroke-width="1.2"/></svg>
<svg class="r" style="left:791.0px;top:111.0px;" width="22" height="22" viewBox="0 0 22 22"><rect x="1" y="10" width="6" height="11" fill="#c8c8c8" stroke="#555" stroke-width="1"/><rect x="7" y="1.5" width="6.5" height="19.5" fill="#fdfdfd" stroke="#333" stroke-width="1.3"/><rect x="13.5" y="5.5" width="6" height="15.5" fill="#8dbdf0" stroke="#2a6fd0" stroke-width="1.3"/></svg>
<svg class="r" style="left:843.0px;top:47.0px;" width="22" height="22" viewBox="0 0 22 22"><path d="M10,1.5 H19.5 V10 M10,1.5 L1.5,10.5 L8,17.5" fill="none" stroke="#a3a3a3" stroke-width="1.45"/><rect x="8" y="10" width="11.5" height="10.5" fill="none" stroke="#a3a3a3" stroke-width="1.3"/><path d="M13.7,10 V20.5 M8,15.2 H19.5" stroke="#a3a3a3" stroke-width="1.45"/><path d="M16,4 H19 M17.5,2.5 V5.5" stroke="#a3a3a3" stroke-width="0.9"/></svg>
<svg class="r" style="left:845.0px;top:79.0px;" width="19" height="22" viewBox="0 0 19 22"><rect x="1.2" y="1.2" width="15.8" height="19.5" fill="none" stroke="#444" stroke-width="1.5"/><rect x="3.5" y="3.5" width="11.2" height="3" fill="#2a6fd0"/><rect x="3.8" y="9" width="2.2" height="2.2" fill="#444"/><rect x="3.8" y="12.8" width="2.2" height="2.2" fill="#444"/><rect x="3.8" y="16.6" width="2.2" height="2.2" fill="#444"/><rect x="7.8" y="9" width="2.2" height="2.2" fill="#444"/><rect x="7.8" y="12.8" width="2.2" height="2.2" fill="#444"/><rect x="7.8" y="16.6" width="2.2" height="2.2" fill="#444"/><rect x="11.8" y="9" width="2.2" height="2.2" fill="#444"/><rect x="11.8" y="12.8" width="2.2" height="2.2" fill="#444"/><rect x="11.8" y="16.6" width="2.2" height="2.2" fill="#444"/></svg>
<svg class="r" style="left:843.0px;top:112.0px;" width="22" height="21" viewBox="0 0 22 21"><rect x="1" y="1" width="19" height="16" fill="none" stroke="#555" stroke-width="1.1"/><path d="M1,5.5 H20 M1,9.5 H11 M1,13.5 H11 M7,1 V17 M13.5,1 V9" stroke="#555" stroke-width="1.1" fill="none"/><path d="M1,17 L3,19 H10" stroke="#555" fill="none"/><rect x="11.5" y="10" width="9" height="10" fill="#fdfdfd" stroke="#555" stroke-width="1.2"/><rect x="13" y="11.5" width="6" height="2" fill="#2a6fd0"/><path d="M13.5,16.5 H18.5 M16,14.5 V19" stroke="#555" stroke-width="0.9"/></svg>
<svg class="r" style="left:1002.2px;top:85.8px;" width="10.5" height="7.5" viewBox="0 0 10.5 7.5"><polyline points="2,2 5.25,5.5 8.5,2" fill="none" stroke="#333" stroke-width="1.3"/></svg>
<svg class="r" style="left:1052.0px;top:46.0px;" width="44" height="40" viewBox="0 0 44 40"><path d="M18,7.2 H3.2 V37.7 H34 V27" fill="none" stroke="#555" stroke-width="1.2"/><path d="M3.2,31 H22 L25,34 V37.7 H3.2 Z" fill="#10c070"/><line x1="13" y1="31" x2="13" y2="37.7" stroke="#555" stroke-width="1"/><circle cx="25.6" cy="14.6" r="10.9" fill="#fcfcfc" stroke="#10c070" stroke-width="3.3"/><line x1="33" y1="22.5" x2="40.5" y2="30.5" stroke="#10c070" stroke-width="2.2"/></svg>
<svg class="r" style="left:1111.0px;top:48.0px;" width="20" height="20" viewBox="0 0 20 20"><circle cx="4.8" cy="4.8" r="3.6" fill="#b3b3b3"/><circle cx="4.8" cy="14.3" r="3.6" fill="#b3b3b3"/><circle cx="14.3" cy="4.8" r="3.6" fill="#b3b3b3"/><circle cx="14.3" cy="14.3" r="3.6" fill="#b3b3b3"/></svg>
<svg class="r" style="left:1216.0px;top:54.3px;" width="11" height="8" viewBox="0 0 11 8"><polyline points="2,2 5.5,6 9,2" fill="none" stroke="#333" stroke-width="1.4"/></svg>
<svg class="r" style="left:1109.0px;top:79.0px;" width="22" height="22" viewBox="0 0 22 22"><path d="M3,2 V7 C3,12 11,12 11,7 V2" fill="none" stroke="#444" stroke-width="1.6"/><path d="M3,6 C3,12 11,12 11,6 M7,11 V19 H17 V15" fill="none" stroke="#10c070" stroke-width="1.6"/><circle cx="17" cy="13" r="2.8" fill="#2a8a55" stroke="#10c070" stroke-width="1.5"/></svg>
<svg class="r" style="left:1187.0px;top:86.0px;" width="11" height="8" viewBox="0 0 11 8"><polyline points="2,2 5.5,6 9,2" fill="none" stroke="#333" stroke-width="1.4"/></svg>
<svg class="r" style="left:1110.0px;top:111.0px;" width="23" height="22" viewBox="0 0 23 22"><rect x="5" y="1" width="16" height="15" fill="none" stroke="#b3b3b3" stroke-width="1.1"/><path d="M5,6 H21 M5,11 H21 M10.5,1 V16 M16,1 V16" stroke="#b3b3b3" stroke-width="1.1"/><circle cx="8" cy="12" r="5" fill="#fdfdfd" stroke="#b3b3b3" stroke-width="1.3"/><line x1="4.5" y1="15.5" x2="1" y2="20" stroke="#b3b3b3" stroke-width="1.6"/></svg>
<svg class="r" style="left:1227.0px;top:118.3px;" width="11" height="8" viewBox="0 0 11 8"><polyline points="2,2 5.5,6 9,2" fill="none" stroke="#b5b5b5" stroke-width="1.2"/></svg>
<svg class="r" style="left:1250.0px;top:50.0px;" width="22" height="16" viewBox="0 0 22 16"><path d="M1,1.8 H21 M1,8 H21 M1,14 H21" stroke="#b3b3b3" stroke-width="1.8"/></svg>
<svg class="r" style="left:1357.0px;top:54.3px;" width="11" height="8" viewBox="0 0 11 8"><polyline points="2,2 5.5,6 9,2" fill="none" stroke="#b5b5b5" stroke-width="1.2"/></svg>
<svg class="r" style="left:1250.0px;top:79.0px;" width="22" height="22" viewBox="0 0 22 22"><text x="0" y="16.5" font-family="Liberation Serif" font-style="italic" font-weight="bold" font-size="22" fill="#a8a8a8">f</text><path d="M12.5,13 L17.5,18.5 M17.5,13 L12.5,18.5" stroke="#a8a8a8" stroke-width="1.8"/></svg>
<svg class="r" style="left:1339.2px;top:86.0px;" width="10.5" height="7.5" viewBox="0 0 10.5 7.5"><polyline points="2,2 5.25,5.5 8.5,2" fill="none" stroke="#b5b5b5" stroke-width="1.2"/></svg>
<svg class="r" style="left:1252.0px;top:111.0px;" width="18" height="23" viewBox="0 0 18 23"><rect x="1.5" y="4" width="14.5" height="17" fill="none" stroke="#a8a8a8" stroke-width="1.5"/><path d="M5,4 V2.5 H8 C8,1 10,1 10,2.5 H13 V5 H5 Z" fill="#fdfdfd" stroke="#a8a8a8" stroke-width="1.1"/><path d="M9.5,9 L7.5,13 H10 L8,17" fill="none" stroke="#a8a8a8" stroke-width="0.9"/></svg>
<svg class="r" style="left:1383.2px;top:118.5px;" width="10.5" height="7.5" viewBox="0 0 10.5 7.5"><polyline points="2,2 5.25,5.5 8.5,2" fill="none" stroke="#b5b5b5" stroke-width="1.2"/></svg>
<svg class="r" style="left:1429.0px;top:47.0px;" width="43" height="40" viewBox="0 0 43 40"><path d="M10,25.5 H4 C0,25.5 0.5,18 5,17.5 C4,10 11,7 14,10 C16,2 27,1 29,10 C33,9 36,13 35,16 C39,16 41,19 40.5,22 C40,25 38,25.5 36,25.5 H29" fill="none" stroke="#444" stroke-width="1"/><circle cx="21.3" cy="25.8" r="7.6" fill="#fcfcfc" stroke="#10c070" stroke-width="2.6"/><line x1="15.5" y1="31.5" x2="11.5" y2="37" stroke="#10c070" stroke-width="2.4"/></svg>
<svg class="r" style="left:1484.0px;top:51.0px;" width="20" height="14" viewBox="0 0 20 14"><rect x="1" y="1" width="17.8" height="11.6" fill="#fdfdfd" stroke="#555" stroke-width="1.3"/><path d="M1.5,1.5 L9.9,8 L18.3,1.5 Z" fill="#d0d0d0" stroke="#555" stroke-width="1"/></svg>
<svg class="r" style="left:1484.0px;top:79.0px;" width="20" height="22" viewBox="0 0 20 22"><rect x="4.5" y="1.5" width="11" height="5" fill="#fdfdfd" stroke="#555" stroke-width="1.3"/><path d="M1,7 H19 V16 H16 M4,16 H1 Z" fill="#d0d0d0" stroke="#555" stroke-width="1.2"/><rect x="4.5" y="10" width="11" height="10" fill="#fdfdfd" stroke="#555" stroke-width="1.3"/></svg>
<svg class="r" style="left:1486.0px;top:112.0px;" width="15" height="19" viewBox="0 0 15 19"><path d="M14,2 H1.5 L7.5,9.5 L1.5,17 H14" fill="none" stroke="#a8a8a8" stroke-width="2.2"/></svg>
<svg class="r" style="left:1585.2px;top:118.5px;" width="10.5" height="7.5" viewBox="0 0 10.5 7.5"><polyline points="2,2 5.25,5.5 8.5,2" fill="none" stroke="#b5b5b5" stroke-width="1.2"/></svg>
<svg class="r" style="left:1613.0px;top:47.0px;" width="22" height="22" viewBox="0 0 22 22"><rect x="1.2" y="1.2" width="19.5" height="19.5" fill="#fdfdfd" stroke="#c8c8c8" stroke-width="1"/><rect x="1.2" y="1.2" width="9.8" height="9.8" fill="#bdbdbd"/><rect x="11" y="11" width="9.7" height="9.7" fill="#bdbdbd"/></svg>
<svg class="r" style="left:1687.2px;top:54.0px;" width="10.5" height="7.5" viewBox="0 0 10.5 7.5"><polyline points="2,2 5.25,5.5 8.5,2" fill="none" stroke="#333" stroke-width="1.3"/></svg>
<svg class="r" style="left:1613.0px;top:79.0px;" width="22" height="22" viewBox="0 0 22 22"><circle cx="11" cy="11" r="9.4" fill="none" stroke="#555" stroke-width="1.3"/><text x="11" y="16" text-anchor="middle" font-family="Liberation Sans" font-weight="bold" font-size="13" fill="#444">?</text></svg>
<svg class="r" style="left:1674.5px;top:84.2px;" width="10.5" height="7.5" viewBox="0 0 10.5 7.5"><polyline points="2,2 5.25,5.5 8.5,2" fill="none" stroke="#333" stroke-width="1.3"/></svg>
<svg class="r" style="left:1613.0px;top:111.0px;" width="22" height="22" viewBox="0 0 22 22"><path d="M11,1.5 L13.5,4 L17,3.5 L17.5,7 L20.5,9.5 L18.5,12.5 L20,16 L16.5,17 L15,20.5 L11.5,19 L8,20.5 L6.5,17 L3,16 L4,12.5 L1.5,9.5 L4.5,7 L5,3.5 L8.5,4 Z" fill="none" stroke="#555" stroke-width="1.1"/><circle cx="11" cy="11" r="2.2" fill="#555"/></svg>
<svg class="r" style="left:1762.0px;top:47.0px;" width="42" height="42" viewBox="0 0 42 42"><path d="M2.2,19 V36 Q2.2,38.2 4.4,38.2 H36.8 Q39,38.2 39,36 V19" fill="none" stroke="#5a5a5a" stroke-width="1.8"/><path d="M20.7,2 V26 M13,9.5 L20.7,2 L28.4,9.5" fill="none" stroke="#5a5a5a" stroke-width="1.8"/></svg>
<div class="r" style="left:1906.0px;top:44.0px;width:6.0px;height:8.5px;background:#fcfcfc;"></div>
<svg class="r" style="left:1884.2px;top:139.8px;" width="15.5" height="10.5" viewBox="0 0 15.5 10.5"><polyline points="2,2 7.75,8.5 13.5,2" fill="none" stroke="#333" stroke-width="1.4"/></svg>
<svg class="r" style="left:1679.0px;top:12.0px;" width="16" height="16" viewBox="0 0 16 16"><path d="M1,1.5 H14.5 V11 H6 L3,14 V11 H1 Z" fill="none" stroke="#444" stroke-width="1.2"/></svg>
<svg class="r" style="left:1812.0px;top:11.0px;" width="17" height="17" viewBox="0 0 17 17"><path d="M13,3 L16,6.5 L13,10 M16,6.5 H11 C8,6.5 6,8 6,11.5 M9,2.5 H1.5 V15.5 H14.5 V12.5" fill="none" stroke="#fff" stroke-width="1.2"/></svg>
<svg class="r" style="left:1888.3px;top:15.8px;" width="12" height="8.5" viewBox="0 0 12 8.5"><polyline points="2,2 6,6.5 10,2" fill="none" stroke="#fff" stroke-width="1.4"/></svg>
<svg class="r" style="left:160.0px;top:174.0px;" width="22" height="22" viewBox="0 0 22 22"><path d="M1.2,1.2 H20.3 V20.3 H3.5 L1.2,18 Z" fill="#d9a3e0" stroke="#9b2fae" stroke-width="1.6"/><rect x="5" y="1.2" width="11.5" height="6.5" fill="#fdfdfd" stroke="#9b2fae" stroke-width="1.4"/><rect x="5.5" y="13" width="10.5" height="7.3" fill="#fdfdfd" stroke="#9b2fae" stroke-width="1.4"/></svg>
<svg class="r" style="left:238.0px;top:174.0px;" width="21" height="22" viewBox="0 0 21 22"><path d="M2,2 V9 H9 M2.5,8.5 C6,3 13,2 16.5,6 C20,10 18,15 15,17.5 L8.5,21" fill="none" stroke="#333" stroke-width="1.4"/></svg>
<svg class="r" style="left:310.9px;top:179.6px;" width="11" height="8" viewBox="0 0 11 8"><polyline points="2,2 5.5,6 9,2" fill="none" stroke="#333" stroke-width="1.4"/></svg>
<svg class="r" style="left:333.0px;top:174.0px;" width="21" height="22" viewBox="0 0 21 22"><path d="M19,2 V9 H12 M18.5,8.5 C15,3 8,2 4.5,6 C1,10 3,15 6,17.5 L12.5,21" fill="none" stroke="#b3b3b3" stroke-width="1.4"/></svg>
<svg class="r" style="left:405.1px;top:179.6px;" width="10.5" height="7.5" viewBox="0 0 10.5 7.5"><polyline points="2,2 5.25,5.5 8.5,2" fill="none" stroke="#b5b5b5" stroke-width="1.2"/></svg>
<svg class="r" style="left:426.0px;top:175.0px;" width="22" height="20" viewBox="0 0 22 20"><rect x="1.2" y="1.2" width="19" height="17" fill="none" stroke="#a8a8a8" stroke-width="1.5"/><path d="M1.2,7 H20.2 M1.2,12.6 H20.2 M7.5,1.2 V18.2 M13.9,1.2 V18.2" stroke="#a8a8a8" stroke-width="1.3"/></svg>
<svg class="r" style="left:571.0px;top:179.0px;" width="11" height="10" viewBox="0 0 11 10"><path d="M1,1.2 H10 M1.5,4.5 L5.5,8.5 L9.5,4.5" fill="none" stroke="#333" stroke-width="1.3"/></svg>
<svg class="r" style="left:116.0px;top:226.0px;" width="15.5" height="10" viewBox="0 0 15.5 10"><polyline points="2,2 7.75,8 13.5,2" fill="none" stroke="#333" stroke-width="1.3"/></svg>
<div class="r" style="left:148.0px;top:223.5px;width:3.0px;height:3.0px;background:#333;"></div>
<div class="r" style="left:148.0px;top:228.5px;width:3.0px;height:3.0px;background:#333;"></div>
<div class="r" style="left:148.0px;top:233.5px;width:3.0px;height:3.0px;background:#333;"></div>
<svg class="r" style="left:170.0px;top:221.0px;" width="17" height="17" viewBox="0 0 17 17"><path d="M1.5,1.5 L15,15 M15,1.5 L1.5,15" stroke="#a8a8a8" stroke-width="1.3"/></svg>
<svg class="r" style="left:197.0px;top:221.0px;" width="22" height="16" viewBox="0 0 22 16"><path d="M1,8 L7.5,14.5 L20.5,1.5" fill="none" stroke="#a8a8a8" stroke-width="1.3"/></svg>
<span class="t" style="left:229.00px;top:219.72px;font-size:19.00px;line-height:19.00px;color:#333;font-family:'Liberation Serif',serif;font-style:italic; transform:scaleX(1.2857);-webkit-text-stroke:0.15px #333;">fx</span>
<svg class="r" style="left:1890.2px;top:223.0px;" width="15.5" height="10" viewBox="0 0 15.5 10"><polyline points="2,2 7.75,8 13.5,2" fill="none" stroke="#333" stroke-width="1.3"/></svg>
<svg class="r" style="left:1400.0px;top:312.0px;" width="17" height="15" viewBox="0 0 17 15"><path d="M1,4 H16 M1,11 H16" stroke="#444" stroke-width="1.2"/><circle cx="10.5" cy="4" r="2.3" fill="#fcfcfc" stroke="#444" stroke-width="1.1"/><circle cx="5.5" cy="11" r="2.3" fill="#fcfcfc" stroke="#444" stroke-width="1.1"/></svg>
<svg class="r" style="left:1477.2px;top:316.6px;" width="11.5" height="7.5" viewBox="0 0 11.5 7.5"><polyline points="2,2 5.75,5.5 9.5,2" fill="none" stroke="#666" stroke-width="1"/></svg>
<svg class="r" style="left:1512.0px;top:342.0px;" width="31" height="31" viewBox="0 0 31 31"><path d="M14.5,4 V24.7 M4.2,14.4 H24.8" stroke="#3a9a4a" stroke-width="1.25"/></svg>
<svg class="r" style="left:1512.0px;top:389.0px;" width="31" height="31" viewBox="0 0 31 31"><path d="M23,5.5 L12.5,17 L14,18.5 L24.5,7 Z" fill="#fff" stroke="#333" stroke-width="1"/><path d="M12.5,16 C9,15.5 7.5,20 5,22 C9,23.5 14.5,22.5 14.5,18 Z" fill="#3b7fd9" stroke="#1e5fb8" stroke-width="0.7"/></svg>
<svg class="r" style="left:1512.0px;top:436.0px;" width="31" height="31" viewBox="0 0 31 31"><path d="M5.5,6.5 H25.5 L18,17 V26.5 H13 V17 Z" fill="none" stroke="#333" stroke-width="1.3"/></svg>
<svg class="r" style="left:1486.0px;top:318.0px;" width="38" height="54" viewBox="0 0 38 54"><path d="M4,6 L32.8,34.8 L20.8,34.8 L26.3,46 L18.3,49.6 L12.8,37 L4,45.5 Z" fill="#12b4ef" stroke="#000" stroke-width="2.7" stroke-linejoin="miter"/></svg>
<svg class="r" style="left:74.0px;top:949.0px;" width="20" height="18" viewBox="0 0 20 18"><rect x="1" y="1" width="17" height="15" fill="none" stroke="#444" stroke-width="1.1"/><path d="M1,4.5 H18 M3.5,8 H7 M3.5,11 H6 M3.5,14 H6" stroke="#444" stroke-width="1"/><circle cx="12.5" cy="12" r="4.6" fill="#fcfcfc" stroke="#444" stroke-width="1.1"/><circle cx="12.5" cy="12" r="2" fill="#333"/></svg>
<svg class="r" style="left:114.0px;top:949.0px;" width="20" height="19" viewBox="0 0 20 19"><circle cx="9" cy="3" r="2" fill="none" stroke="#444" stroke-width="1.1"/><path d="M1.5,6 L9,8 L16.5,6 M9,8 V12 L4,17 M9,12 L11,14" fill="none" stroke="#444" stroke-width="1.1"/><path d="M11,12 L18,18.5 M18,12 L11,18.5" stroke="#444" stroke-width="1.2"/></svg>
<svg class="r" style="left:1564.0px;top:948.0px;" width="18" height="18" viewBox="0 0 18 18"><rect x="1" y="1" width="15.5" height="15.5" fill="none" stroke="#444" stroke-width="1.1"/><path d="M1,6.2 H16.5 M1,11.3 H16.5 M6.2,1 V16.5 M11.3,1 V16.5" stroke="#444" stroke-width="1"/></svg>
<svg class="r" style="left:1613.0px;top:948.0px;" width="20" height="19" viewBox="0 0 20 19"><rect x="1" y="1" width="17.5" height="16" fill="none" stroke="#444" stroke-width="1.2"/><rect x="4.5" y="3.5" width="10.5" height="11" fill="none" stroke="#444" stroke-width="1"/><path d="M6.5,6.5 H13 M6.5,9 H13 M6.5,11.5 H13" stroke="#444" stroke-width="0.9"/></svg>
<svg class="r" style="left:1663.0px;top:948.0px;" width="20" height="19" viewBox="0 0 20 19"><rect x="1" y="1" width="17.5" height="16" fill="none" stroke="#444" stroke-width="1.2"/><path d="M5,1 V10 H13 V1" fill="none" stroke="#444" stroke-width="1.1"/></svg>
</body></html>
